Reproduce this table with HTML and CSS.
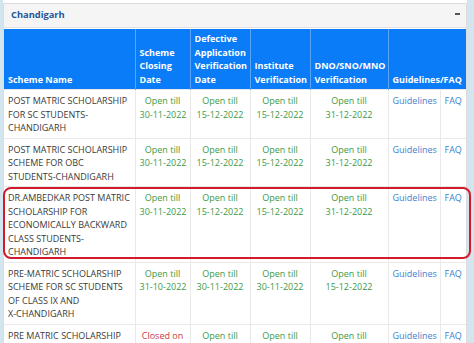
FILE: index.html
```html
<!DOCTYPE html>
<html lang="en">
<head>
<meta charset="utf-8">
<title>Chandigarh Schemes</title>
<link rel="stylesheet" href="styles.css">
</head>
<body>
<div class="page">
  <div class="prev"></div>
  <div class="panel">
    <div class="panel-heading">
      <span class="title">Chandigarh</span>
      <span class="collapse-btn"></span>
    </div>
    <table class="schemes">
      <colgroup>
        <col class="c-name"><col class="c-close"><col class="c-def"><col class="c-inst"><col class="c-dno"><col class="c-guide"><col class="c-faq">
      </colgroup>
      <thead>
        <tr>
          <th>Scheme Name</th>
          <th>Scheme<br>Closing<br>Date</th>
          <th>Defective<br>Application<br>Verification<br>Date</th>
          <th>Institute<br>Verification</th>
          <th>DNO/SNO/MNO<br>Verification</th>
          <th colspan="2">Guidelines/FAQ</th>
        </tr>
      </thead>
      <tbody>
        <tr>
          <td class="name">POST MATRIC SCHOLARSHIP<br>FOR SC STUDENTS-<br>CHANDIGARH</td>
          <td class="open">Open till<br>30-11-2022</td>
          <td class="open">Open till<br>15-12-2022</td>
          <td class="open">Open till<br>15-12-2022</td>
          <td class="open">Open till<br>31-12-2022</td>
          <td class="link"><a href="#">Guidelines</a></td>
          <td class="link"><a href="#">FAQ</a></td>
        </tr>
        <tr>
          <td class="name">POST MATRIC SCHOLARSHIP<br>SCHEME FOR OBC<br>STUDENTS-CHANDIGARH</td>
          <td class="open">Open till<br>30-11-2022</td>
          <td class="open">Open till<br>15-12-2022</td>
          <td class="open">Open till<br>15-12-2022</td>
          <td class="open">Open till<br>31-12-2022</td>
          <td class="link"><a href="#">Guidelines</a></td>
          <td class="link"><a href="#">FAQ</a></td>
        </tr>
        <tr>
          <td class="name">DR.AMBEDKAR POST MATRIC<br>SCHOLARSHIP FOR<br>ECONOMICALLY BACKWARD<br>CLASS STUDENTS-<br>CHANDIGARH</td>
          <td class="open">Open till<br>30-11-2022</td>
          <td class="open">Open till<br>15-12-2022</td>
          <td class="open">Open till<br>15-12-2022</td>
          <td class="open">Open till<br>31-12-2022</td>
          <td class="link"><a href="#">Guidelines</a></td>
          <td class="link"><a href="#">FAQ</a></td>
        </tr>
        <tr>
          <td class="name">PRE-MATRIC SCHOLARSHIP<br>SCHEME FOR SC STUDENTS<br>OF CLASS IX AND<br>X-CHANDIGARH</td>
          <td class="open">Open till<br>31-10-2022</td>
          <td class="open">Open till<br>30-11-2022</td>
          <td class="open">Open till<br>30-11-2022</td>
          <td class="open">Open till<br>15-12-2022</td>
          <td class="link"><a href="#">Guidelines</a></td>
          <td class="link"><a href="#">FAQ</a></td>
        </tr>
        <tr>
          <td class="name">PRE MATRIC SCHOLARSHIP</td>
          <td class="closed">Closed on</td>
          <td class="open">Open till</td>
          <td class="open">Open till</td>
          <td class="open">Open till</td>
          <td class="link"><a href="#">Guidelines</a></td>
          <td class="link"><a href="#">FAQ</a></td>
        </tr>
      </tbody>
    </table>
  </div>
  <div class="highlight"></div>
</div>
</body>
</html>
```
FILE: styles.css
```css
* { box-sizing: border-box; }
html, body { margin: 0; padding: 0; }
body {
  background: #d3e6ef;
  font-family: "Open Sans", "Liberation Sans", sans-serif;
  font-size: 9px;
  line-height: 13.5px;
  color: #3a3a3a;
  height: 343px;
  overflow: hidden;
}
.page {
  position: relative;
  padding: 0 7px 0 3px;
}
.prev {
  height: 3px;
  background: #fff;
}
.panel {
  background: #fff;
  border: 1px solid #dcdcdc;
  border-bottom: none;
}
.panel-heading {
  height: 24px;
  background: #f5f5f5;
  border-bottom: 1px solid #e2e2e2;
  display: flex;
  align-items: center;
  justify-content: space-between;
  padding: 0 6px 1px 7px;
  margin-bottom: 1px;
}
.title {
  color: #23569a;
  font-weight: 700;
  font-size: 9.3px;
}
.collapse-btn {
  width: 5px;
  height: 1.5px;
  background: #555;
  margin-bottom: 2px;
}
.schemes {
  width: 462px;
  table-layout: fixed;
  border-collapse: collapse;
}
.c-name { width: 131px; }
.c-close { width: 55px; }
.c-def { width: 60px; }
.c-inst { width: 60px; }
.c-dno { width: 78px; }
.c-guide { width: 52px; }
.c-faq { width: 26px; }
.schemes th {
  background: #0a7cf7;
  color: #fff;
  font-weight: 700;
  text-align: left;
  vertical-align: bottom;
  white-space: nowrap;
  padding: 3px 4px 3px 4px;
  border-left: 1px solid #5aa5f6;
}
.schemes th:first-child { border-left: none; }
.schemes td {
  vertical-align: top;
  padding: 4px 4px 3px 4px;
  border: 1px solid #e9e9e9;
  white-space: nowrap;
}
.schemes td:first-child { border-left: none; }
.schemes td:last-child { border-right: none; }
.schemes td.open, .schemes td.closed { text-align: center; }
.open { color: #3d9a45; }
.closed { color: #c9383f; }
.link a {
  color: #3b82cf;
  text-decoration: none;
}
.highlight {
  position: absolute;
  left: 3px;
  top: 187px;
  width: 468px;
  height: 72px;
  border: 2px solid #d11a2c;
  border-radius: 8px;
  pointer-events: none;
}
```
